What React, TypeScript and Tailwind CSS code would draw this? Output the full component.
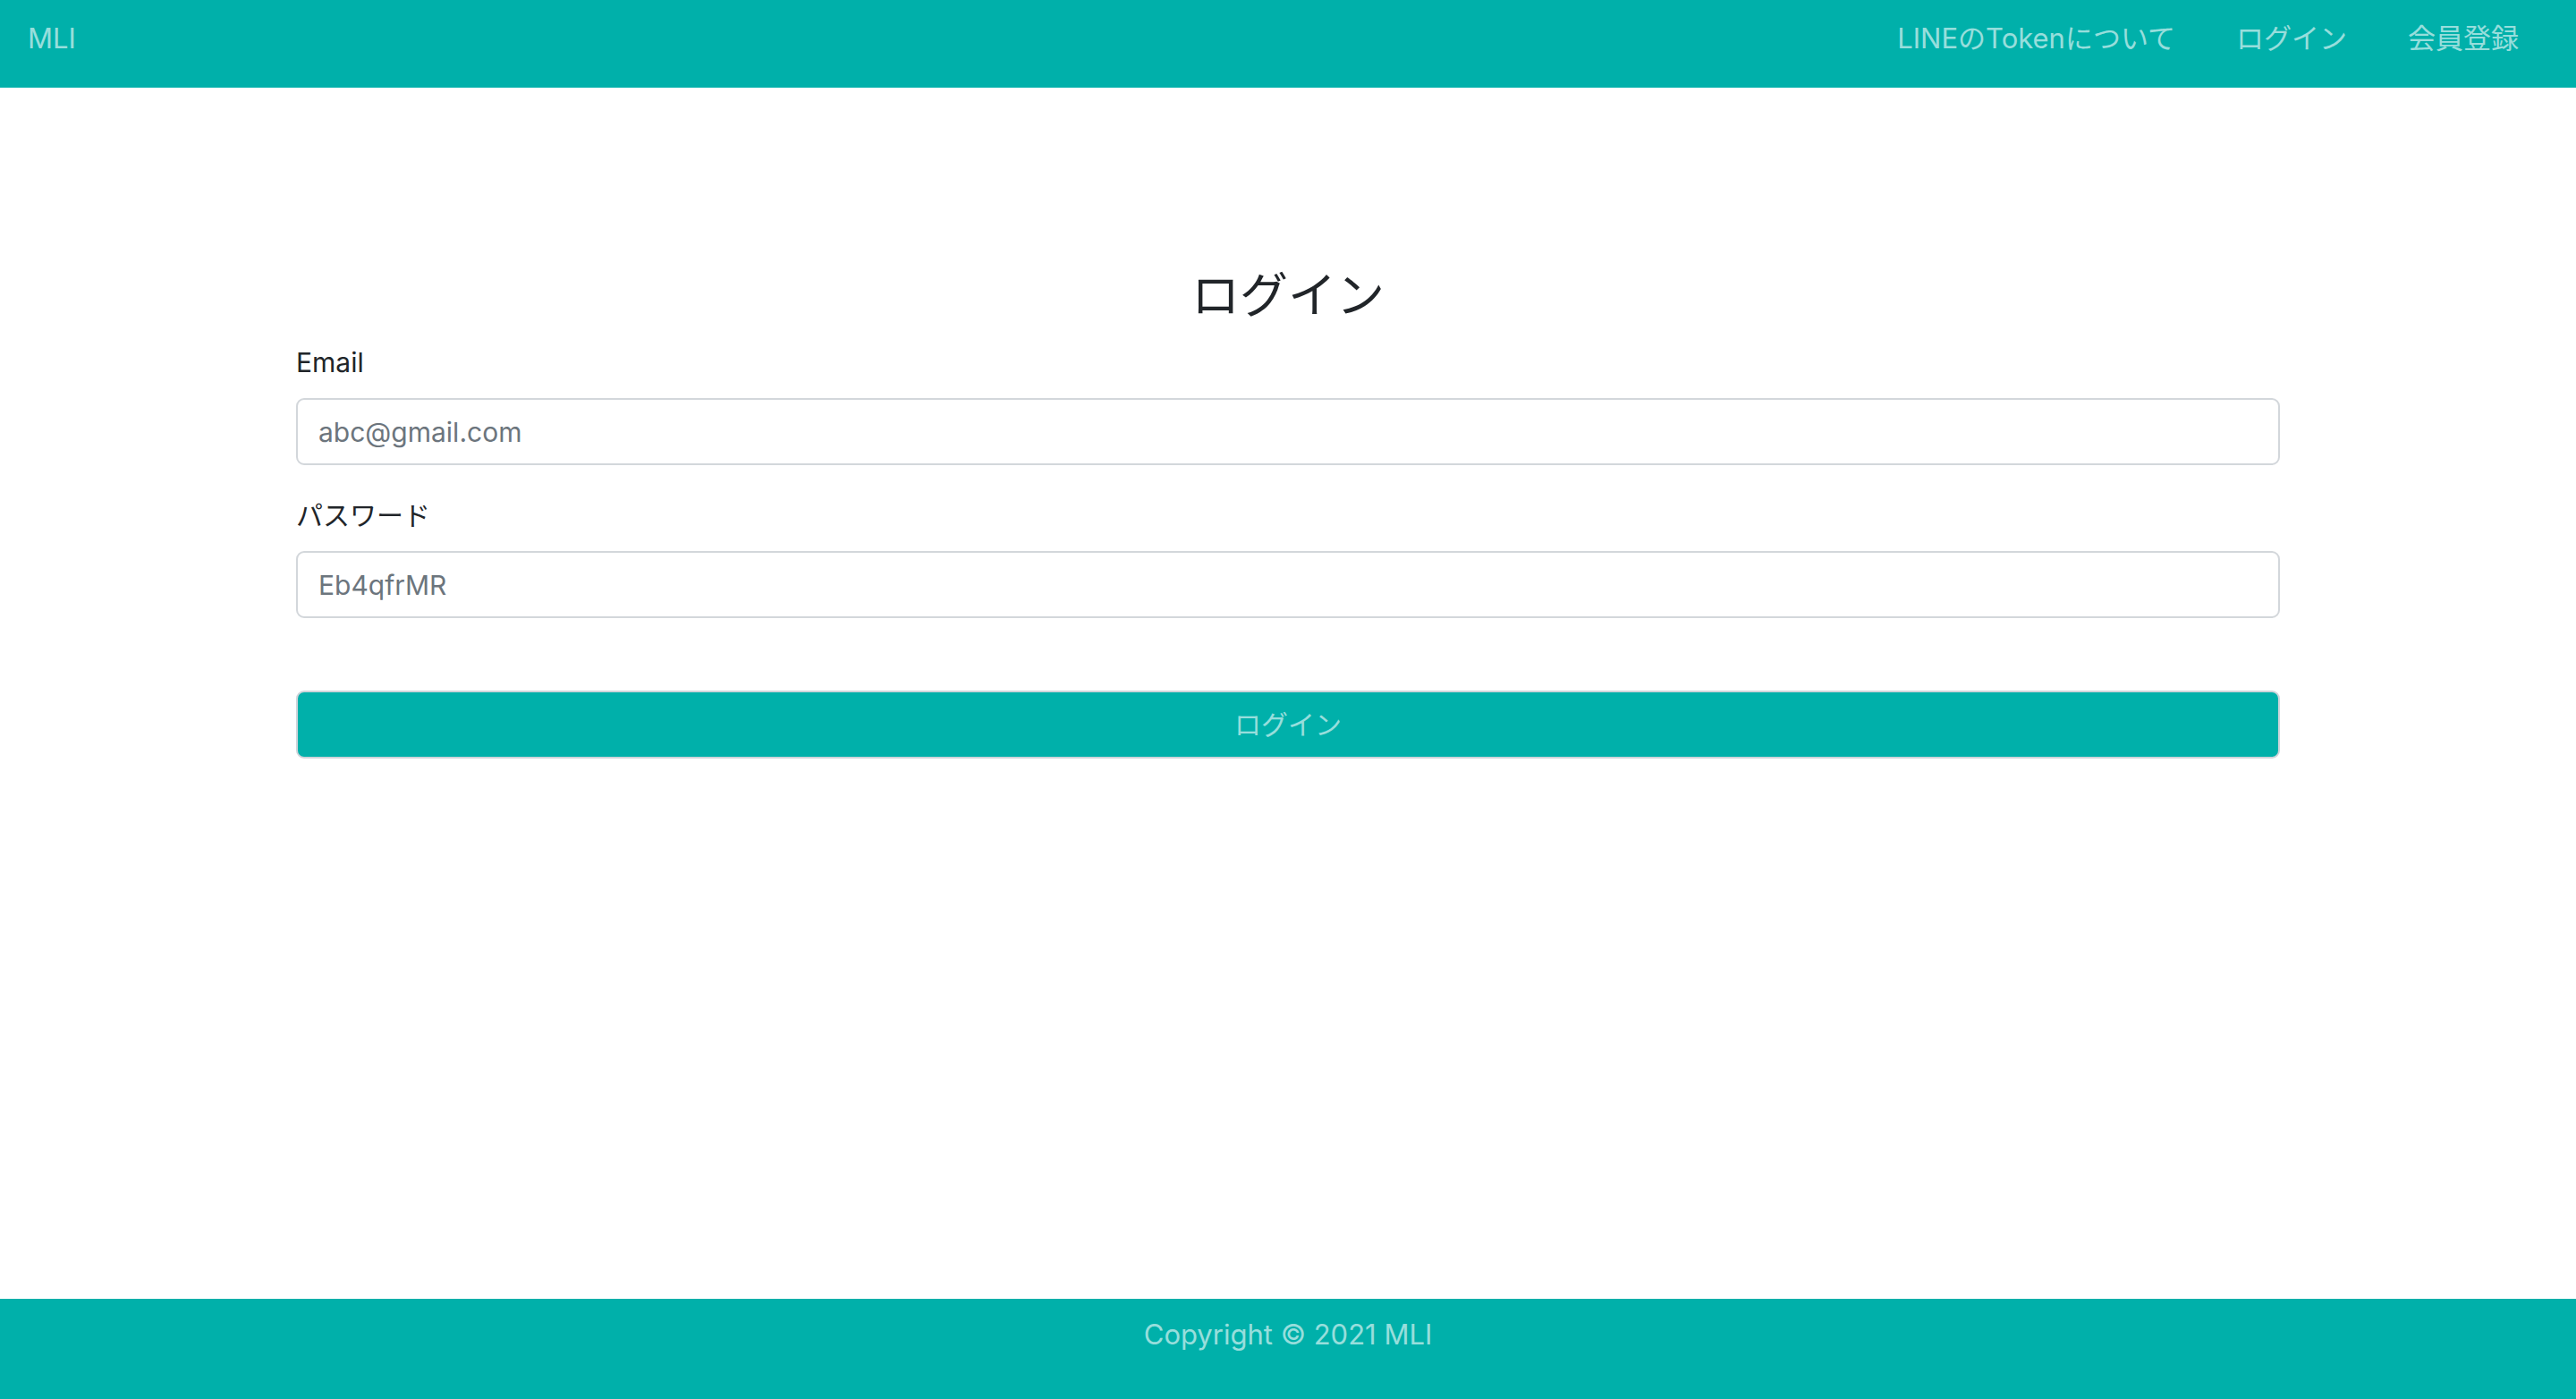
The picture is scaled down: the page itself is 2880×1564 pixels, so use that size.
import React from "react";

const NavBar = () => {
  return (
    <nav className="flex h-[98px] items-center justify-between bg-[#00b0aa] pb-[13px] pl-[31px] pr-[64px] text-[31px] leading-[45px] text-white/60">
      <a className="cursor-pointer">MLI</a>
      <div className="flex items-center gap-[68px]">
        <a className="cursor-pointer">LINEのTokenについて</a>
        <a className="cursor-pointer">ログイン</a>
        <a className="cursor-pointer">会員登録</a>
      </div>
    </nav>
  );
};

const LoginForm = () => {
  return (
    <form className="mx-auto mt-[199px] flex w-[2218px] flex-col">
      <h2 className="mb-[19px] text-center text-[54px] font-normal leading-[67px] text-[#212529]">
        ログイン
      </h2>
      <label className="mb-[18px] text-[30px] leading-[44px] text-[#212529]">Email</label>
      <input
        className="h-[75px] rounded-[9px] border-2 border-[#d3d7db] px-[23px] text-[30px] outline-none placeholder:text-[#6c757d]"
        placeholder="abc@gmail.com"
      />
      <label className="mb-[18px] mt-[34px] text-[30px] leading-[44px] text-[#212529]">
        パスワード
      </label>
      <input
        type="text"
        className="h-[75px] rounded-[9px] border-2 border-[#d3d7db] px-[23px] text-[30px] outline-none placeholder:text-[#6c757d]"
        placeholder="Eb4qfrMR"
      />
      <button
        type="submit"
        className="mt-[81px] h-[76px] cursor-pointer rounded-[9px] border-2 border-[#ced4da] bg-[#00b0aa] text-[30px] text-white/60"
      >
        ログイン
      </button>
    </form>
  );
};

export default function App() {
  return (
    <div className="flex min-h-screen flex-col bg-white font-[Inter,'Noto_Sans_CJK_JP',sans-serif]">
      <NavBar />
      <main className="flex-1">
        <LoginForm />
      </main>
      <footer className="h-[112px] bg-[#00b0aa] pt-[18px] text-center text-[31px] leading-[44px] text-white/60">
        Copyright © 2021 MLI
      </footer>
    </div>
  );
}
